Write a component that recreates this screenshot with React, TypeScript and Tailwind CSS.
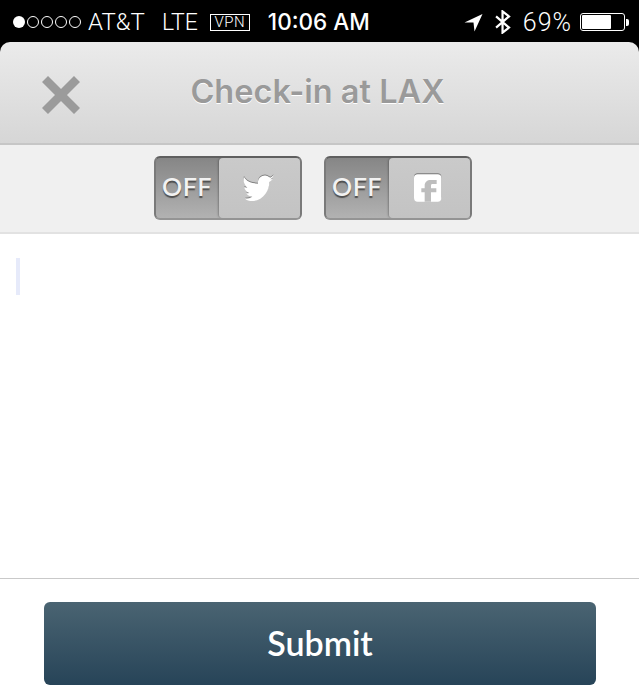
function Toggle({ children }: { children: React.ReactNode }) {
  return (
    <div className="flex w-[148px] h-[64px] rounded-[6px] border-2 border-t-[#5f5f5f] border-b-[#949494] border-x-[#7a7a7a] overflow-hidden bg-gradient-to-b from-[#868686] to-[#b2b2b2]">
      <div className="w-[63px] flex items-center justify-center pb-[2px] font-['Lato',sans-serif] font-semibold text-[25px] leading-none text-[#f2f2f2] [text-shadow:0_2px_1px_#4f4f4f] tracking-[0.5px]">
        OFF
      </div>
      <div className="flex-1 flex items-center justify-center rounded-l-[4px] bg-gradient-to-b from-[#cacaca] to-[#c3c3c3] shadow-[-1px_0_2px_rgba(0,0,0,0.25)]">
        {children}
      </div>
    </div>
  );
}

function TwitterBird() {
  return (
    <svg width="50" height="45" viewBox="0 0 150 135" className="[filter:drop-shadow(0_-1px_0_#808080)]">
      <path
        fill="white"
        d="M30 36 C38 50 52 55 72 56 C70 42 82 30 96 32 C102 33 106 36 109 38 C112 37 115 34 119 31 C117 36 114 40 109 43 C112 43 115 42 117 41 C114 45 110 48 106 51 C106 76 90 104 58 108 C48 109 38 105 33 101 C42 101 50 98 55 95 C46 94 40 90 37 85 C40 85 43 85 46 84 C38 81 31 74 31 66 C34 67 37 68 40 68 C31 60 26 47 30 36 Z"
      />
    </svg>
  );
}

function FacebookSquare() {
  return (
    <svg width="50" height="45" viewBox="0 0 150 135" className="[filter:drop-shadow(0_-1px_0_#777777)]">
      <rect x="30" y="28" width="82" height="82" rx="11" fill="white" />
      <path
        fill="#bdbdbd"
        d="M62 110 V82 H52 V70 H62 V62 C62 51 70 45 80 45 H98 V57 H86 C82 57 81 59 81 62 V70 H97 V82 H81 V110 Z"
      />
    </svg>
  );
}

export default function App() {
  return (
    <div className="w-[639px] h-[690px] flex flex-col bg-black overflow-hidden font-['Liberation_Sans',sans-serif]">
      {/* status bar */}
      <div className="h-[42px] flex items-center pl-[13px] pt-[2px] text-white text-[24px] leading-none">
        <div className="flex items-center gap-[2px]">
          <span className="w-[12px] h-[12px] rounded-full bg-white" />
          <span className="w-[12px] h-[12px] rounded-full border border-white" />
          <span className="w-[12px] h-[12px] rounded-full border border-white" />
          <span className="w-[12px] h-[12px] rounded-full border border-white" />
          <span className="w-[12px] h-[12px] rounded-full border border-white" />
        </div>
        <span className="ml-[7px] font-['Roboto',sans-serif] font-light">AT&amp;T</span>
        <span className="ml-[17px] font-['Roboto',sans-serif] font-light text-[23px]">LTE</span>
        <span className="ml-[12px] w-[40px] h-[17px] border border-white flex items-center justify-center text-[15px] font-['Roboto',sans-serif] font-light tracking-[0.5px]">
          VPN
        </span>
        <span className="ml-[18px] font-['Inter',sans-serif] font-medium text-[22.5px]">10:06 AM</span>
        <div className="ml-auto flex items-center pr-[10px]">
          <svg width="19" height="19" viewBox="0 0 19 19" className="mr-[11px]">
            <path d="M18.5 1 L0.5 9.5 L9.5 9.5 L10.5 18.5 Z" fill="white" />
          </svg>
          <svg width="18" height="24" viewBox="0 0 18 26" className="mr-[11px]" fill="none" stroke="white" strokeWidth="2.4">
            <path d="M1.5 7 L15.5 19 L8.5 24.5 V1.5 L15.5 7 L1.5 19" />
          </svg>
          <span className="font-['Roboto',sans-serif] font-light text-[25px] tracking-[1px]">69%</span>
          <div className="ml-[8px] w-[45px] h-[18px] rounded-[3px] border border-white p-[1px]">
            <div className="w-[29px] h-full rounded-[1px] bg-white" />
          </div>
          <span className="ml-[1px] w-[3px] h-[7px] rounded-r-[2px] bg-white" />
        </div>
      </div>

      {/* header */}
      <div className="relative h-[101px] rounded-t-[10px] bg-gradient-to-b from-[#ebebeb] to-[#d6d6d6] flex items-center justify-center">
        <svg width="38" height="38" viewBox="0 0 38 38" className="absolute left-[42px] top-[34px]" stroke="#9b9b9b" strokeWidth="8.5">
          <path d="M3 3 L35 35 M35 3 L3 35" />
        </svg>
        <h1 className="pr-[4px] font-['Inter',sans-serif] font-semibold text-[32.5px] leading-none text-[#9a9a9a] [text-shadow:0_1px_0_#fff]">
          Check-in at LAX
        </h1>
      </div>

      {/* share toggles */}
      <div className="h-[91px] border-y-2 border-t-[#c6c6c6] border-b-[#e2e2e2] bg-[#f0f0f0] flex items-center justify-center gap-[22px] pb-[2px] pr-[14px]">
        <Toggle>
          <TwitterBird />
        </Toggle>
        <Toggle>
          <FacebookSquare />
        </Toggle>
      </div>

      {/* text area */}
      <div className="flex-1 bg-white pl-[16px] pt-[24px]">
        <div className="w-[4px] h-[37px] bg-[#e6eafa]" />
      </div>

      {/* footer */}
      <div className="h-[112px] border-t border-[#c9c9c9] bg-white pt-[23px] px-[44px]">
        <button className="w-[552px] h-[83px] rounded-[6px] bg-gradient-to-b from-[#4a6472] to-[#274458] pb-[2px] text-white font-['Lato',sans-serif] font-semibold text-[34px] leading-none">
          Submit
        </button>
      </div>
    </div>
  );
}
